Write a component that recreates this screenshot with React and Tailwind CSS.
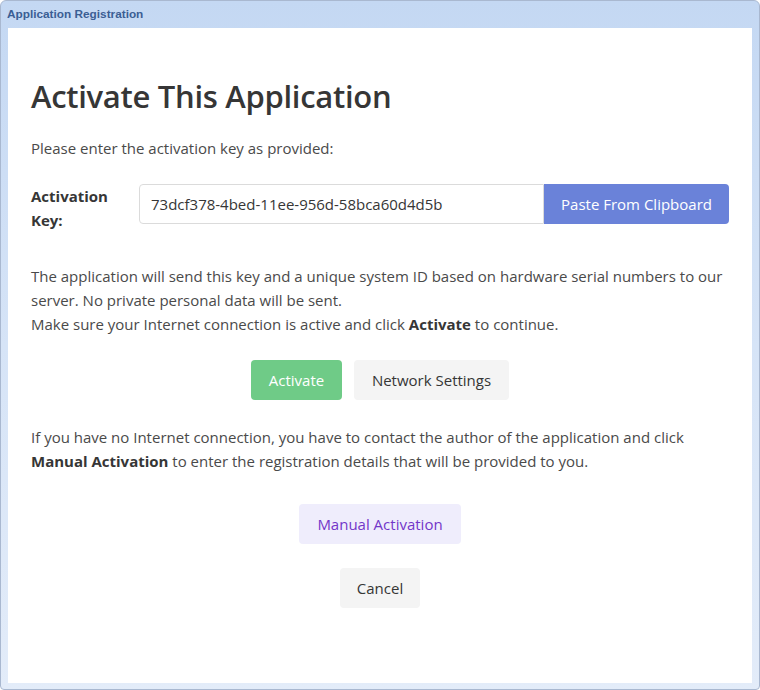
export default function App() {
    const font = { fontFamily: '"Open Sans", "Noto Sans", sans-serif' }

    return (
        <div className="w-[760px] h-[690px] bg-white" style={font}>
            <div className="w-full h-full flex flex-col rounded-t-[6px] rounded-b-[4px] border border-[#a9b8d0] bg-gradient-to-b from-[#c4d8f3] via-[#d6e4f7] to-[#e3ecf9] overflow-hidden">
                <div className="h-[27px] flex items-center pl-[6px] shrink-0">
                    <span className="text-[11.8px] font-bold text-[#3b5e94] leading-none" style={{ fontFamily: '"Liberation Sans", Arial, sans-serif' }}>
                        Application Registration
                    </span>
                </div>
                <div className="flex-1 mx-[7px] mb-[6px] bg-white flex flex-col px-[23px] pt-[48px] text-[#4a4a4a] text-[15px] leading-[24px]">
                    <h1 className="text-[31px] font-semibold text-[#363636] leading-[40px] tracking-[-0.3px]">Activate This Application</h1>

                    <p className="mt-[20px]">Please enter the activation key as provided:</p>

                    <div className="mt-[24px] flex items-start">
                        <div className="w-[108px] font-bold text-[#363636]">
                            Activation<br />Key:
                        </div>
                        <div className="flex-1 flex h-[40px]">
                            <div className="flex-1 flex items-center pl-[11px] border border-[#dbdbdb] rounded-l-[4px] text-[#363636]">
                                73dcf378-4bed-11ee-956d-58bca60d4d5b
                            </div>
                            <button className="w-[185px] bg-[#6a82d9] text-white rounded-r-[4px] flex items-center justify-center">
                                Paste From Clipboard
                            </button>
                        </div>
                    </div>

                    <p className="mt-[32px]">
                        The application will send this key and a unique system ID based on hardware serial numbers to our server. No private personal data will be sent.
                        <br />
                        Make sure your Internet connection is active and click <b className="text-[#363636]">Activate</b> to continue.
                    </p>

                    <div className="mt-[24px] flex justify-center gap-[12px]">
                        <button className="w-[91px] h-[40px] rounded-[4px] bg-[#6fcb87] text-white flex items-center justify-center">Activate</button>
                        <button className="w-[155px] h-[40px] rounded-[4px] bg-[#f4f4f4] text-[#363636] flex items-center justify-center">Network Settings</button>
                    </div>

                    <p className="mt-[25px]">
                        If you have no Internet connection, you have to contact the author of the application and click <b className="text-[#363636]">Manual Activation</b> to enter the registration details that will be provided to you.
                    </p>

                    <div className="mt-[31px] flex justify-center">
                        <button className="w-[162px] h-[40px] rounded-[4px] bg-[#efedfc] text-[#7336c9] flex items-center justify-center">Manual Activation</button>
                    </div>

                    <div className="mt-[24px] flex justify-center">
                        <button className="w-[80px] h-[40px] rounded-[4px] bg-[#f4f4f4] text-[#363636] flex items-center justify-center">Cancel</button>
                    </div>
                </div>
            </div>
        </div>
    )
}
